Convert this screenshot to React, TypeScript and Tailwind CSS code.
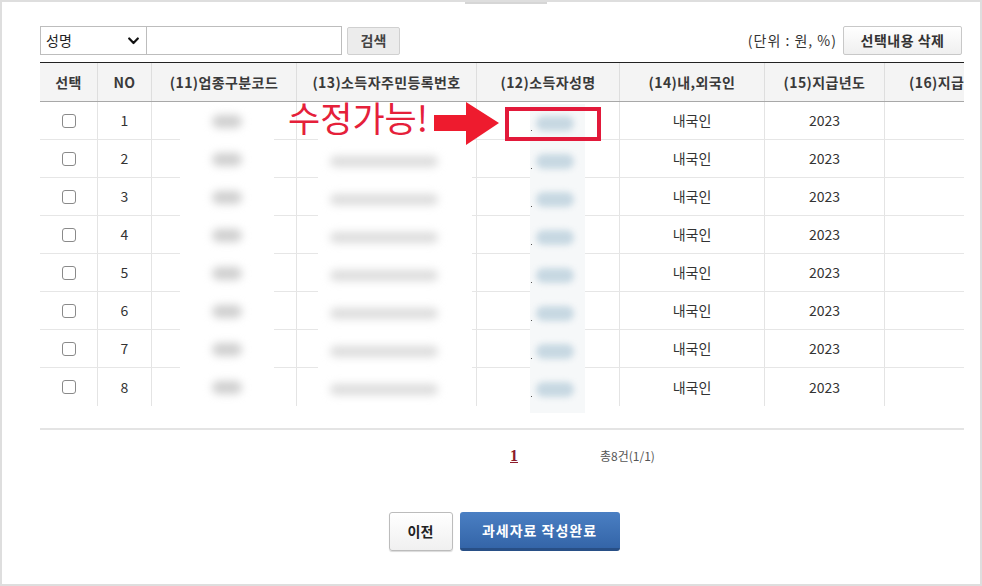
import React from "react";

const cols = [58, 54, 145, 180, 143, 145, 120, 130];
const headers = ["선택", "NO", "(11)업종구분코드", "(13)소득자주민등록번호", "(12)소득자성명", "(14)내,외국인", "(15)지급년도", "(16)지급구분"];
const rows = [1, 2, 3, 4, 5, 6, 7, 8];

function Cell({ w, children, last, header }: { w: number; children?: React.ReactNode; last?: boolean; header?: boolean }) {
  return (
    <div
      style={{ width: w, minWidth: w }}
      className={
        "flex items-center justify-center whitespace-nowrap overflow-visible " +
        (last ? "" : header ? "border-r border-[#dedede]" : "border-r border-[#e4e4e4]")
      }
    >
      {children}
    </div>
  );
}

export default function App() {
  return (
    <div
      className="relative w-[982px] h-[586px] box-border border-2 border-[#dedede] bg-white overflow-hidden text-[#333]"
      style={{ fontFamily: '"Noto Sans CJK KR", "Noto Sans", sans-serif' }}
    >
      {/* top tab hint */}
      <div className="absolute left-[463px] top-0 w-[82px] h-[2px] bg-[#d6d6d6]" />

      <div className="pl-[38px] pr-[16px] pt-[24px]">
        {/* search row */}
        <div className="flex items-center h-[29px] w-[924px]">
          <div className="flex items-center justify-between w-[107px] h-[29px] border border-[#bdbdbd] pl-[5px] pr-[7px] text-[14px] text-[#222]">
            <span>성명</span>
            <svg width="11" height="8" viewBox="0 0 11 8">
              <path d="M1.2 1.5 L5.5 6 L9.8 1.5" fill="none" stroke="#111" strokeWidth="2.2" strokeLinecap="round" strokeLinejoin="round" />
            </svg>
          </div>
          <div className="w-[195px] h-[29px] border border-[#bdbdbd] border-l-0" />
          <div className="ml-[5px] w-[53px] h-[28px] flex items-center justify-center bg-[#ececec] border border-[#d0d0d0] rounded-[2px] text-[14px] font-bold text-[#444]">
            검색
          </div>
          <div className="ml-auto text-[14px] tracking-[1px] text-[#333] mr-[6px]">(단위 : 원, %)</div>
          <div className="w-[119px] h-[29px] flex items-center justify-center bg-gradient-to-b from-[#ffffff] to-[#efefef] border border-[#c8c8c8] rounded-[2px] text-[14px] tracking-[0.5px] font-bold text-[#333] mr-[2px]">
            선택내용 삭제
          </div>
        </div>

        {/* table */}
        <div className="mt-[7px] w-[924px] overflow-hidden">
          <div className="w-[980px]">
            <div className="flex h-[40px] border-t border-[#222] border-b border-b-[#a8a8a8] bg-[#f4f4f4] text-[14px] tracking-[0.4px] font-bold text-[#3a3a3a]">
              {headers.map((h, i) => (
                <Cell key={h} w={cols[i]} header last={i === headers.length - 1}>
                  {h}
                </Cell>
              ))}
            </div>
            {rows.map((n) => (
              <div key={n} className={"flex h-[38px] text-[14px] text-[#333] " + (n < 8 ? "border-b border-[#e6e6e6]" : "")}>
                <Cell w={cols[0]}>
                  <div className="w-[14px] h-[14px] rounded-[3px] border border-[#8a8a8a] bg-white" />
                </Cell>
                <Cell w={cols[1]}>{n}</Cell>
                <Cell w={cols[2]} />
                <Cell w={cols[3]} />
                <Cell w={cols[4]} />
                <Cell w={cols[5]}>내국인</Cell>
                <Cell w={cols[6]}>2023</Cell>
                <Cell w={cols[7]} last />
              </div>
            ))}
          </div>
        </div>

        {/* bottom rule */}
        <div className="mt-[22px] w-[924px] h-[2px] bg-[#e4e4e4]" />

        {/* pagination */}
        <div className="flex items-center h-[30px] mt-[11px]">
          <span
            className="ml-[470px] text-[16px] font-bold text-[#8c1c2c] underline"
            style={{ fontFamily: '"Liberation Serif", serif' }}
          >
            1
          </span>
          <span className="ml-[82px] text-[12px] text-[#555]">총8건(1/1)</span>
        </div>

        {/* buttons */}
        <div className="flex justify-center gap-[7px] mt-[41px] w-[924px] pl-[4px]">
          <div className="w-[64px] h-[39px] flex items-center justify-center bg-gradient-to-b from-[#ffffff] to-[#f0f0f0] border border-[#bcbcbc] rounded-[3px] shadow-[0_1px_1px_rgba(0,0,0,0.15)] text-[14px] font-bold text-[#222]">
            이전
          </div>
          <div className="w-[160px] h-[39px] flex items-center justify-center bg-gradient-to-b from-[#4a7fc3] to-[#3465a8] border-b-[3px] border-[#284f86] rounded-[3px] text-[14px] tracking-[1px] font-bold text-white">
            과세자료 작성완료
          </div>
        </div>
      </div>

      {/* anonymization masks (overlaid on the table) */}
      <div className="absolute left-[178px] top-[100px] w-[94px] h-[311px] bg-white flex flex-col">
        {rows.map((n) => (
          <div key={n} className="h-[38px] flex items-center pl-[32px]">
            <div className="w-[30px] h-[13px] rounded-full bg-[#cfcfcf] blur-[4px]" />
          </div>
        ))}
      </div>
      <div className="absolute left-[316px] top-[102px] w-[154px] h-[309px] bg-white flex flex-col">
        {rows.map((n) => (
          <div key={n} className="h-[38px] flex items-center pl-[12px]">
            {n > 1 && <div className="w-[108px] h-[11px] rounded-full bg-[#dcdcdc] blur-[4px]" />}
          </div>
        ))}
      </div>
      <div className="absolute left-[528px] top-[102px] w-[55px] h-[309px] bg-[#f6f8f9] flex flex-col">
        {rows.map((n) => (
          <div key={n} className="relative h-[38px] flex items-center pl-[6px]">
            <div className="absolute left-[1px] top-[26px] w-[1px] h-[1px] bg-[#555]" />
            <div className="w-[38px] h-[15px] rounded-full bg-[#c7d8e2] blur-[3px]" />
          </div>
        ))}
      </div>

      {/* annotation */}
      <div
        className="absolute left-[286px] top-[97px] text-[35px] leading-none text-[#e5203a] whitespace-nowrap"
        style={{ fontFamily: '"Noto Sans CJK KR", sans-serif' }}
      >
        수정가능!
      </div>
      <svg className="absolute left-[432px] top-[99px]" width="66" height="46" viewBox="0 0 66 46">
        <polygon points="0,14 32,14 32,1 65,22 32,44 32,30 0,30" fill="#ee1b2e" />
      </svg>
      <div className="absolute left-[503px] top-[105px] w-[96px] h-[34px] border-[4px] border-[#e2193a]" />
    </div>
  );
}
